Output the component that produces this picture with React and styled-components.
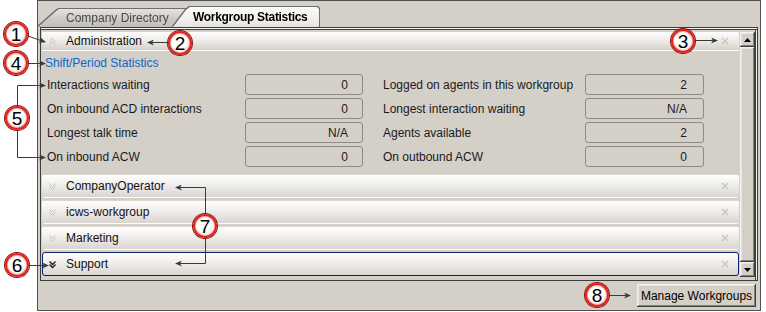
import React from 'react';
import styled, { createGlobalStyle } from 'styled-components';

const GlobalStyle = createGlobalStyle`
  html, body {
    margin: 0;
    padding: 0;
    background: #fff;
  }
  body {
    font-family: "Liberation Sans", Arial, sans-serif;
    font-size: 12px;
    color: #000;
  }
`;

const stats = [
  ['Interactions waiting', '0', 'Logged on agents in this workgroup', '2'],
  ['On inbound ACD interactions', '0', 'Longest interaction waiting', 'N/A'],
  ['Longest talk time', 'N/A', 'Agents available', '2'],
  ['On inbound ACW', '0', 'On outbound ACW', '0'],
];

const groups = ['CompanyOperator', 'icws-workgroup', 'Marketing', 'Support'];

const callouts = [
  { n: 1, x: 16, y: 34 },
  { n: 2, x: 180, y: 43 },
  { n: 3, x: 683, y: 41 },
  { n: 4, x: 16, y: 63 },
  { n: 5, x: 17, y: 118 },
  { n: 6, x: 17, y: 265 },
  { n: 7, x: 205, y: 226 },
  { n: 8, x: 597, y: 295 },
];

const Page = styled.div`
  position: relative;
  width: 766px;
  height: 312px;
  overflow: hidden;
  background: #fff;
`;

const Frame = styled.div`
  box-sizing: border-box;
  margin-left: 37px;
  width: 724px;
  height: 311px;
  border: 1px solid #505050;
  background: #d4d0c8;
  display: flex;
  flex-direction: column;
`;

const TabStrip = styled.div`
  height: 26px;
  display: flex;
  align-items: flex-end;
`;

const TabOutline = styled.div`
  position: relative;
  z-index: ${p => (p.$active ? 2 : 1)};
  margin-left: ${p => p.$offset}px;
  filter: drop-shadow(1px 0 0 #6e6e6e) drop-shadow(-1px 0 0 #6e6e6e) drop-shadow(0 -1px 0 #6e6e6e);
`;

const TabFace = styled.div`
  box-sizing: border-box;
  width: ${p => p.$width}px;
  height: ${p => p.$height}px;
  padding-left: ${p => p.$indent}px;
  display: flex;
  align-items: center;
  clip-path: polygon(0 100%, ${p => p.$slant}px 3px, ${p => p.$slant + 4}px 0, calc(100% - 2px) 0, 100% 2px, 100% 100%);
  background: ${p => (p.$active
    ? 'linear-gradient(#fbfbfb, #f1f0ee 60%, #e6e4e1)'
    : 'linear-gradient(#e4e3e1, #cdcbc8 55%, #c2c0bc)')};
  color: ${p => (p.$active ? '#000' : '#4a4a4a')};
  font-weight: ${p => (p.$active ? 'bold' : 'normal')};
  letter-spacing: ${p => (p.$active ? '-0.3px' : '0')};
  font-size: 12px;
  white-space: nowrap;
`;

const Panel = styled.div`
  box-sizing: border-box;
  height: 254px;
  margin: 0 2px;
  border: 1px solid #3e3e3e;
  box-shadow: inset 0 1px 0 #f4f3f1, inset 0 2px 0 #3e3e3e, inset -1px 0 0 #f4f3f1, inset -2px 0 0 #3e3e3e;
  padding: 3px 2px 3px 1px;
  display: flex;
  gap: 1px;
`;

const List = styled.div`
  flex: 1;
  display: flex;
  flex-direction: column;
`;

const GroupHeader = styled.div`
  box-sizing: border-box;
  height: ${p => (p.$open ? 20 : 24)}px;
  margin-top: ${p => p.$gap}px;
  border: 1px solid ${p => (p.$focused ? '#0a246a' : 'transparent')};
  border-radius: ${p => (p.$open ? '3px 3px 0 0' : '3px')};
  background: ${p => (p.$open
    ? 'linear-gradient(#fefefe, #ebe9e6 55%, #d4d0c8)'
    : 'linear-gradient(#fefefe, #f3f2f0 35%, #e3e0dd 75%, #d9d6d1)')};
  padding: 0 9px 0 5px;
  display: flex;
  align-items: center;
  font-size: 12px;
  color: #111;
`;

const Chevron = styled.svg`
  width: 9px;
  height: 9px;
  margin-right: 9px;
  flex: none;
`;

const GroupName = styled.span`
  flex: 1;
`;

const Close = styled.svg`
  width: 8px;
  height: 8px;
  flex: none;
`;

const StatsBlock = styled.div`
  padding-left: 3px;
`;

const SectionLink = styled.div`
  margin-top: 5px;
  line-height: 14px;
  color: #0a66cc;
  font-size: 12px;
`;

const StatsGrid = styled.div`
  margin: 4px 0 0 2px;
  display: grid;
  grid-template-columns: 198px 118px 222px 119px;
  grid-auto-rows: 21px;
  row-gap: 3px;
`;

const StatLabel = styled.div`
  display: flex;
  align-items: center;
  padding-left: ${p => (p.$right ? 20 : 0)}px;
  color: #1a1a1a;
  font-size: 12px;
  white-space: nowrap;
`;

const ValueBox = styled.div`
  box-sizing: border-box;
  border: 1px solid #8e8b86;
  border-radius: 3px;
  display: flex;
  align-items: center;
  justify-content: flex-end;
  padding-right: ${p => (p.$right ? 16 : 14)}px;
  color: #1a1a1a;
  font-size: 12px;
`;

const bevel = `
  background: #d4d0c8;
  box-shadow: inset -1px -1px 0 #404040, inset 1px 1px 0 #f4f3f1, inset -2px -2px 0 #808080, inset 2px 2px 0 #e6e4e0;
`;

const ScrollBar = styled.div`
  width: 15px;
  margin-top: 1px;
  display: flex;
  flex-direction: column;
`;

const ScrollButton = styled.div`
  ${bevel}
  height: 15px;
  flex: none;
  display: flex;
  align-items: center;
  justify-content: center;
`;

const Thumb = styled.div`
  ${bevel}
  flex: 1;
`;

const Footer = styled.div`
  flex: 1;
  display: flex;
  justify-content: flex-end;
  padding: 3px 4px 0 0;
`;

const Button = styled.div`
  ${bevel}
  box-sizing: border-box;
  width: 119px;
  height: 23px;
  display: flex;
  align-items: center;
  justify-content: center;
  font-size: 12px;
  color: #000;
`;

const Overlay = styled.svg`
  position: absolute;
  left: 0;
  top: 0;
  pointer-events: none;
`;

const Badge = styled.div`
  position: absolute;
  left: ${p => p.$x - 12}px;
  top: ${p => p.$y - 12}px;
  box-sizing: border-box;
  width: 24px;
  height: 24px;
  border-radius: 50%;
  border: 2px solid #e3231b;
  box-shadow: 0 0 0 1px #8a1410, inset 0 0 0 1px #f7b3ad;
  background: radial-gradient(circle at 40% 35%, #ffffff 45%, #dcdcdc 100%);
  display: flex;
  align-items: center;
  justify-content: center;
  font-family: "Liberation Sans", Arial, sans-serif;
  font-size: 19px;
  line-height: 1;
  color: #000;
`;

function DoubleChevron({ up, dark }) {
  const c = dark ? '#1e1e1e' : '#c3bfba';
  const w = dark ? 1.4 : 1;
  return (
    <Chevron viewBox="0 0 9 9">
      {up ? (
        <g fill="none" stroke={c} strokeWidth={w}>
          <path d="M1.5 4.5 L4.5 1.5 L7.5 4.5" />
          <path d="M1.5 7.5 L4.5 4.5 L7.5 7.5" />
        </g>
      ) : (
        <g fill="none" stroke={c} strokeWidth={w}>
          <path d="M1.5 1.5 L4.5 4.5 L7.5 1.5" />
          <path d="M1.5 4.5 L4.5 7.5 L7.5 4.5" />
        </g>
      )}
    </Chevron>
  );
}

function CloseIcon() {
  return (
    <Close viewBox="0 0 8 8">
      <path d="M1 1 L7 7 M7 1 L1 7" stroke="#c6c3bf" strokeWidth="1.3" fill="none" />
    </Close>
  );
}

function Arrow({ down }) {
  return (
    <svg width="7" height="4" viewBox="0 0 7 4">
      <polygon points={down ? '0,0 7,0 3.5,4' : '0,4 7,4 3.5,0'} fill="#000" />
    </svg>
  );
}

function Annotations() {
  const s = { stroke: '#3a3a3a', strokeWidth: 1, fill: 'none', markerEnd: 'url(#head)' };
  return (
    <Overlay width="766" height="312" viewBox="0 0 766 312">
      <defs>
        <marker id="head" markerUnits="userSpaceOnUse" markerWidth="7" markerHeight="6" refX="6" refY="3" orient="auto">
          <path d="M0 0 L7 3 L0 6 L2 3 Z" fill="#3a3a3a" />
        </marker>
      </defs>
      <path d="M28 36 L45 42" {...s} />
      <path d="M168 42.5 L148 42.5" {...s} />
      <path d="M695 40.5 L717 40.5" {...s} />
      <path d="M28 63.5 L45 63.5" {...s} />
      <path d="M17.5 118 V85.5 H45" {...s} />
      <path d="M17.5 118 V157.5 H45" {...s} />
      <path d="M29 265.5 L48 265.5" {...s} />
      <path d="M205.5 226 V187.5 H176" {...s} />
      <path d="M205.5 226 V263.5 H176" {...s} />
      <path d="M610 295.5 L630 295.5" {...s} />
    </Overlay>
  );
}

export default function App() {
  return (
    <Page>
      <GlobalStyle />
      <Frame>
        <TabStrip>
          <TabOutline $offset={0}>
            <TabFace $width={152} $height={18} $indent={28} $slant={17}>Company Directory</TabFace>
          </TabOutline>
          <TabOutline $offset={-17} $active>
            <TabFace $active $width={146} $height={20} $indent={20} $slant={13}>Workgroup Statistics</TabFace>
          </TabOutline>
        </TabStrip>
        <Panel>
          <List>
            <GroupHeader $open $gap={0}>
              <DoubleChevron up />
              <GroupName>Administration</GroupName>
              <CloseIcon />
            </GroupHeader>
            <StatsBlock>
              <SectionLink>Shift/Period Statistics</SectionLink>
              <StatsGrid>
                {stats.map(([l1, v1, l2, v2]) => (
                  <React.Fragment key={l1}>
                    <StatLabel>{l1}</StatLabel>
                    <ValueBox>{v1}</ValueBox>
                    <StatLabel $right>{l2}</StatLabel>
                    <ValueBox $right>{v2}</ValueBox>
                  </React.Fragment>
                ))}
              </StatsGrid>
            </StatsBlock>
            {groups.map((g, i) => (
              <GroupHeader key={g} $gap={i === 0 ? 7 : 2} $focused={g === 'Support'}>
                <DoubleChevron dark={g === 'Support'} />
                <GroupName>{g}</GroupName>
                <CloseIcon />
              </GroupHeader>
            ))}
          </List>
          <ScrollBar>
            <ScrollButton><Arrow /></ScrollButton>
            <Thumb />
            <ScrollButton><Arrow down /></ScrollButton>
          </ScrollBar>
        </Panel>
        <Footer>
          <Button>Manage Workgroups</Button>
        </Footer>
      </Frame>
      <Annotations />
      {callouts.map(c => (
        <Badge key={c.n} $x={c.x} $y={c.y}>{c.n}</Badge>
      ))}
    </Page>
  );
}
